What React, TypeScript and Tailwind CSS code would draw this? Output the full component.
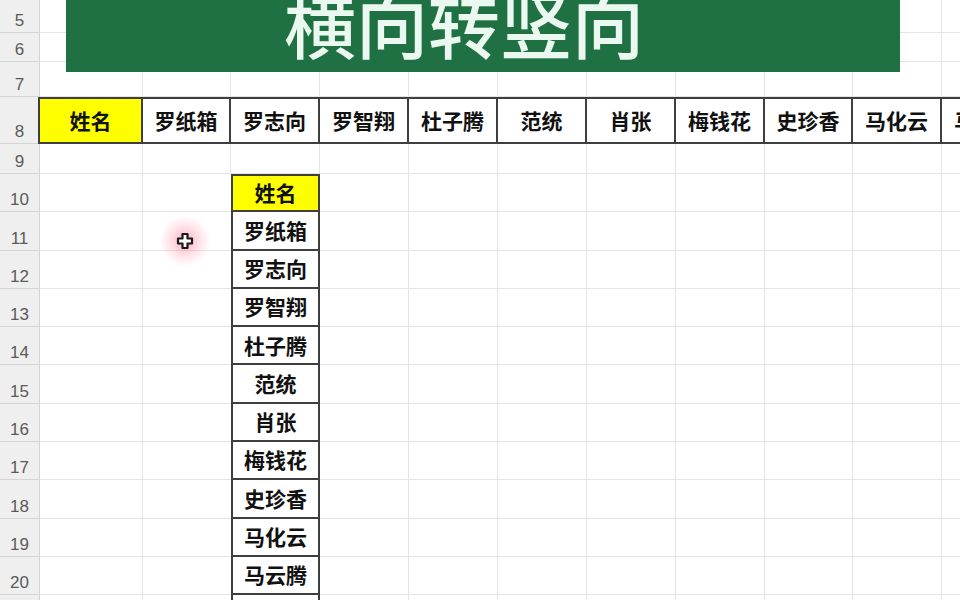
import React from "react";

const names = ["罗纸箱", "罗志向", "罗智翔", "杜子腾", "范统", "肖张", "梅钱花", "史珍香", "马化云", "马云腾"];

// row numbers shown on the left, starting at row 5
const rowNums = [5, 6, 7, 8, 9, 10, 11, 12, 13, 14, 15, 16, 17, 18, 19, 20, 21];
const COLS = 11;

const cjk = { fontFamily: '"Noto Sans CJK SC", "Noto Sans", sans-serif' };

function Cell({ r, c }: { r: number; c: number }) {
  // header row (row 8) – horizontal list
  if (r === 8) {
    const first = c === 0;
    return (
      <div
        className={`flex items-center justify-center border-t-2 border-r-2 border-b-2 border-[#3f3f3f] text-[21px] font-bold text-[#111] whitespace-nowrap overflow-hidden ${
          first ? "border-l-2 bg-[#ffff00] -ml-[2px]" : "bg-white"
        }`}
        style={cjk}
      >
        {first ? "姓名" : names[c - 1]}
      </div>
    );
  }
  // vertical list in column C, rows 10..21
  if (c === 2 && r >= 10) {
    const i = r - 10;
    const label = i === 0 ? "姓名" : names[i - 1] ?? "";
    return (
      <div
        className={`flex items-center justify-center border-l-2 border-r-2 border-b-2 border-[#3f3f3f] text-[21px] font-bold text-[#111] whitespace-nowrap ${
          i === 0 ? "border-t-2 bg-[#ffff00]" : "bg-white"
        }`}
        style={cjk}
      >
        {label}
      </div>
    );
  }
  return (
    <div
      className={`border-r border-b border-[#e4e4e4] ${
        c === 1 && r >= 10 ? "border-r-0" : ""
      }`}
    />
  );
}

export default function App() {
  return (
    <div className="relative w-[960px] h-[600px] overflow-hidden bg-white">
      <div className="grid grid-cols-[40px_103px_88px_89px_89px_89px_89px_89px_89px_88px_89px_89px] grid-rows-[33px_29px_35px_47px_30px_38.3px_38.3px_38.3px_38.3px_38.3px_38.3px_38.3px_38.3px_38.3px_38.3px_38.3px_38.3px]">
        {rowNums.map((r) => (
          <React.Fragment key={r}>
            <div
              className="flex items-end justify-center bg-[#efefef] border-r border-b border-[#d4d4d4] text-[17px] leading-[22px] text-[#5a5a5a]"
              style={{ fontFamily: '"Liberation Sans", Arial, sans-serif' }}
            >
              {r}
            </div>
            {Array.from({ length: COLS }).map((_, c) => (
              <Cell key={c} r={r} c={c} />
            ))}
          </React.Fragment>
        ))}
      </div>

      {/* title banner shape */}
      <div
        className="absolute left-[66px] top-[-22px] w-[834px] h-[94px] bg-[#1f7144] flex items-center justify-center pr-[38px] pb-[6px] text-[72px] font-medium leading-none text-[#eaf8ef]"
        style={cjk}
      >
        横向转竖向
      </div>

      {/* mouse click highlight */}
      <div className="absolute left-[159px] top-[215px] w-[52px] h-[52px] rounded-full bg-[radial-gradient(circle,rgba(255,110,140,0.55)_0%,rgba(255,160,180,0.3)_40%,rgba(255,255,255,0)_70%)] flex items-center justify-center">
        <svg width="18" height="18" viewBox="0 0 18 18">
          <path
            d="M6.5 2h5v4.5h4.5v5h-4.5v4.5h-5v-4.5h-4.5v-5h4.5z"
            fill="#fff"
            stroke="#1a1a1a"
            strokeWidth="2.2"
            strokeLinejoin="round"
          />
        </svg>
      </div>
    </div>
  );
}
